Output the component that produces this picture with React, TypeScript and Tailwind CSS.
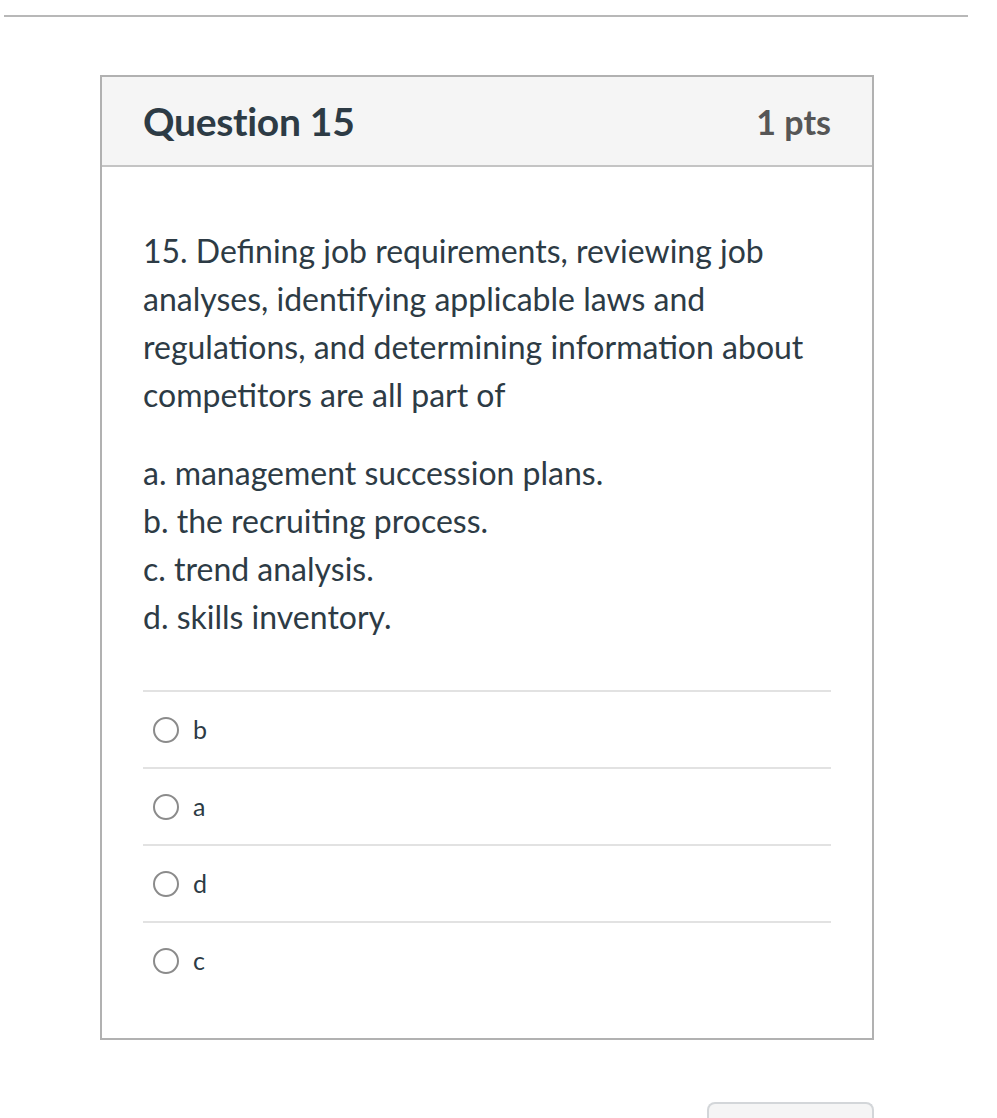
const answers = ["b", "a", "d", "c"];

const options = [
  "a. management succession plans.",
  "b. the recruiting process.",
  "c. trend analysis.",
  "d. skills inventory."
];

function Radio() {
  return <span className="block h-[26px] w-[26px] shrink-0 rounded-full border-[2px] border-[#8b8b8b] bg-white" />;
}

export default function App() {
  return (
    <div className="min-h-[1118px] bg-white font-['Lato','Liberation_Sans',sans-serif] text-[#2d3b45]">
      <div className="pt-[15px]">
        <div className="ml-[4px] h-[2px] w-[964px] bg-[#b8b8b8]" />
      </div>

      <div className="ml-[100px] mt-[58px] w-[774px] border-[2px] border-[#b1b1b1]">
        <div className="flex h-[90px] items-center justify-between border-b-[2px] border-[#c4c4c4] bg-[#f5f5f5] px-[41px]">
          <h2 className="text-[39px] font-bold tracking-[-0.3px]">Question 15</h2>
          <div className="text-[34px] font-bold text-[#565656]">1 pts</div>
        </div>

        <div className="px-[41px] pb-[40px] pt-[60px]">
          <p className="text-[32px] leading-[48px]">
            15. Defining job requirements, reviewing job analyses, identifying applicable laws and regulations, and determining information about competitors are all part of
          </p>
          <div className="mt-[30px] text-[32px] leading-[48px]">
            {options.map((option) => (
              <div key={option}>{option}</div>
            ))}
          </div>

          <div className="mt-[49px]">
            {answers.map((answer) => (
              <label key={answer} className="flex h-[77px] items-center gap-[14px] border-t-[2px] border-[#e2e2e2] pl-[10px]">
                <Radio />
                <span className="text-[25px]">{answer}</span>
              </label>
            ))}
          </div>
        </div>
      </div>

      <div className="mt-[62px] flex justify-end pr-[123px]">
        <div className="h-[40px] w-[167px] rounded-t-[8px] border-[2px] border-b-0 border-[#d3d6d9] bg-[#f5f5f5]" />
      </div>
    </div>
  );
}
